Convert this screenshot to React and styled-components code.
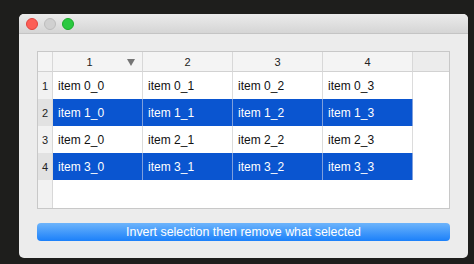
import React from 'react';
import styled, { createGlobalStyle } from 'styled-components';

const GlobalStyle = createGlobalStyle`
    html, body {
        margin: 0;
        padding: 0;
        background: #1e1e1c;
        width: 474px;
        height: 264px;
        overflow: hidden;
        font-family: "Liberation Sans", Arial, sans-serif;
    }
`;

const Window = styled.div`
    margin: 14px 0 0 19px;
    width: 449px;
    height: 244px;
    background: #ececec;
    border-radius: 5px;
    overflow: hidden;
    display: flex;
    flex-direction: column;
`;

const TitleBar = styled.div`
    height: 19px;
    flex-shrink: 0;
    display: flex;
    align-items: center;
    gap: 6px;
    padding-left: 7px;
    background: linear-gradient(#ebebeb, #d5d5d5);
    border-bottom: 1px solid #c4c4c4;
`;

const Light = styled.span`
    width: 12px;
    height: 12px;
    border-radius: 50%;
    box-sizing: border-box;
    background: ${p => p.$color};
    border: 1px solid ${p => p.$edge};
`;

const Body = styled.div`
    flex: 1;
    padding: 17px 18px 17px 18px;
    display: flex;
    flex-direction: column;
    gap: 14px;
`;

const Table = styled.div`
    height: 158px;
    box-sizing: border-box;
    border: 1px solid #c8c8c8;
    background: #fff;
    display: grid;
    grid-template-columns: 15px repeat(4, 90px) 1fr;
    grid-template-rows: 20px repeat(4, 27px) 1fr;
    font-size: 12px;
`;

const HeaderCell = styled.div`
    background: ${p => (p.$blank ? '#ececec' : '#f4f4f4')};
    border-right: ${p => (p.$blank ? 'none' : '1px solid #d8d8d8')};
    border-bottom: 1px solid #d2d2d2;
    padding-right: ${p => (p.$sorted ? '16px' : '0')};
    font-size: 11px;
    color: #222;
    display: flex;
    align-items: center;
    justify-content: center;
    position: relative;
`;

const SortArrow = styled.svg`
    position: absolute;
    right: 7px;
    top: 7px;
`;

const RowHeader = styled.div`
    background: ${p => (p.$selected ? '#e2e2e2' : '#f2f2f2')};
    border-right: 1px solid #d8d8d8;
    font-size: 11px;
    color: #222;
    display: flex;
    align-items: center;
    justify-content: center;
`;

const Cell = styled.div`
    background: ${p => (p.$selected ? '#0a55d0' : '#fff')};
    color: ${p => (p.$selected ? '#fff' : '#111')};
    border-right: 1px solid ${p => (p.$selected ? '#7f9fdc' : '#dcdcdc')};
    padding-left: 5px;
    display: flex;
    align-items: center;
`;

const Empty = styled.div`
    background: ${p => (p.$grey ? '#f2f2f2' : '#fff')};
    border-right: ${p => (p.$grey ? '1px solid #d8d8d8' : 'none')};
    grid-column: ${p => p.$span || 'auto'};
`;

const ActionButton = styled.button`
    height: 18px;
    border: none;
    border-radius: 4px;
    background: linear-gradient(#6db4fb, #1b80fa);
    color: #fff;
    font-family: "Liberation Sans", Arial, sans-serif;
    font-size: 12.4px;
    padding: 0;
    cursor: pointer;
`;

const rows = [0, 1, 2, 3];
const cols = [0, 1, 2, 3];

const App = () => {
    return (
        <>
            <GlobalStyle />
            <Window>
                <TitleBar>
                    <Light $color="#fc5f57" $edge="#e0443e" />
                    <Light $color="#d0d0d0" $edge="#bcbcbc" />
                    <Light $color="#2ac940" $edge="#1aab29" />
                </TitleBar>
                <Body>
                    <Table>
                        <HeaderCell />
                        {cols.map(c => (
                            <HeaderCell key={c} $sorted={c === 0}>
                                {c + 1}
                                {c === 0 && (
                                    <SortArrow width="8" height="7" viewBox="0 0 8 7">
                                        <path d="M0 0 H8 L4 7 Z" fill="#757575" />
                                    </SortArrow>
                                )}
                            </HeaderCell>
                        ))}
                        <HeaderCell $blank />
                        {rows.map(r => {
                            const sel = r % 2 === 1;
                            return (
                                <React.Fragment key={r}>
                                    <RowHeader $selected={sel}>{r + 1}</RowHeader>
                                    {cols.map(c => (
                                        <Cell key={c} $selected={sel}>item {r}_{c}</Cell>
                                    ))}
                                    <Empty />
                                </React.Fragment>
                            );
                        })}
                        <Empty $grey />
                        <Empty $span="span 5" />
                    </Table>
                    <ActionButton>Invert selection then remove what selected</ActionButton>
                </Body>
            </Window>
        </>
    );
};

export default App;
